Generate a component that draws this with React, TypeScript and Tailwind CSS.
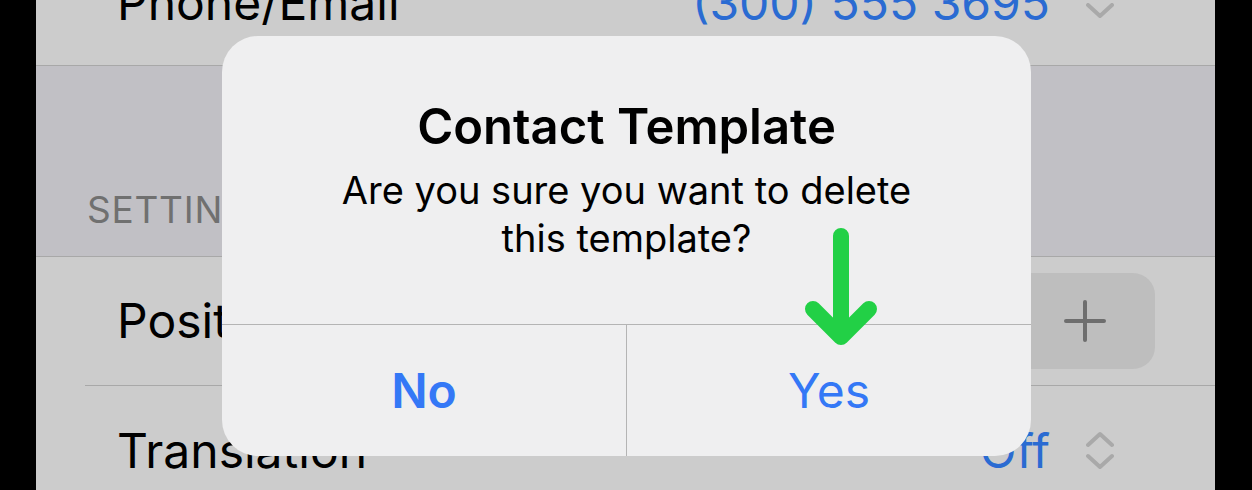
const font = { fontFamily: "Inter, 'Noto Sans', sans-serif" };

function ChevronDown() {
  return (
    <svg width="28" height="16" viewBox="0 0 28 16" fill="none">
      <path d="M2 2 L14 13 L26 2" stroke="#a9a9a9" strokeWidth="4" strokeLinecap="round" strokeLinejoin="round" />
    </svg>
  );
}

function ChevronUpDown() {
  return (
    <svg width="28" height="40" viewBox="0 0 28 40" fill="none">
      <path d="M2 14 L14 3 L26 14" stroke="#a9a9a9" strokeWidth="4" strokeLinecap="round" strokeLinejoin="round" />
      <path d="M2 25 L14 36 L26 25" stroke="#a9a9a9" strokeWidth="4" strokeLinecap="round" strokeLinejoin="round" />
    </svg>
  );
}

function Stepper() {
  return (
    <div className="flex h-[96px] w-[282px] items-center rounded-[22px] bg-[#bebebe]">
      <div className="flex flex-1 items-center justify-center">
        <div className="h-[4px] w-[40px] rounded-full bg-[#6e6e6e]" />
      </div>
      <div className="h-[48px] w-[2px] bg-[#aaaaaa]" />
      <div className="flex flex-1 items-center justify-center">
        <svg width="42" height="42" viewBox="0 0 42 42">
          <path d="M21 2 V40 M2 21 H40" stroke="#6e6e6e" strokeWidth="4" strokeLinecap="round" />
        </svg>
      </div>
    </div>
  );
}

function Arrow() {
  return (
    <svg className="absolute left-[800px] top-[220px]" width="90" height="130" viewBox="0 0 90 130" fill="none">
      <path d="M41 16 V116 M13 89 L41 117 L69 89" stroke="#22d046" strokeWidth="16" strokeLinecap="round" strokeLinejoin="round" />
    </svg>
  );
}

export default function App() {
  return (
    <div className="relative flex h-[490px] w-[1252px] overflow-hidden bg-black" style={font}>
      <div className="w-[36px] shrink-0 bg-black" />
      <div className="flex w-[1179px] shrink-0 flex-col">
        {/* Phone/Email row, cut at top */}
        <div className="flex h-[66px] shrink-0 items-end border-b border-[#a8a8a8] bg-[#cccccc] pb-[38px] pl-[81px] pr-[101px]">
          <span className="text-[48px] leading-[48px] text-black">Phone/Email</span>
          <span className="ml-auto text-[48px] leading-[48px] text-[#2a6bd2]">(300) 555 3695</span>
          <span className="mb-[8px] ml-[36px]">
            <ChevronDown />
          </span>
        </div>

        {/* section header */}
        <div className="flex h-[191px] shrink-0 items-end border-b border-[#a8a8a8] bg-[#c1c0c5] pb-[22px] pl-[51px]">
          <span className="text-[37px] uppercase leading-[48px] tracking-[0.02em] text-[#707070]">Settings</span>
        </div>

        {/* Position row */}
        <div className="flex h-[129px] shrink-0 bg-[#cccccc] pl-[49px]">
          <div className="flex flex-1 items-center border-b border-[#a8a8a8] pl-[32px] pr-[60px]">
            <span className="text-[48px] leading-[48px] text-black">Position</span>
            <span className="ml-auto">
              <Stepper />
            </span>
          </div>
        </div>

        {/* Translation row */}
        <div className="flex h-[129px] shrink-0 items-center bg-[#cccccc] pl-[81px] pr-[101px]">
          <span className="text-[48px] leading-[48px] text-black">Translation</span>
          <span className="ml-auto text-[48px] leading-[48px] text-[#2a6bd2]">Off</span>
          <span className="ml-[36px]">
            <ChevronUpDown />
          </span>
        </div>
      </div>
      <div className="flex-1 bg-black" />

      {/* alert */}
      <div className="absolute left-[222px] top-[36px] flex h-[420px] w-[809px] flex-col overflow-hidden rounded-[36px] bg-[#efeff0]">
        <div className="flex flex-1 flex-col items-center pt-[63px] text-center">
          <div className="text-[49px] font-semibold leading-[56px] text-black">Contact Template</div>
          <div className="mt-[11px] text-[38px] leading-[48px] text-black">
            Are you sure you want to delete
            <br />
            this template?
          </div>
        </div>
        <div className="flex h-[132px] shrink-0 border-t border-[#b4b4b4]">
          <div className="flex flex-1 items-center justify-center border-r border-[#b4b4b4] text-[48px] font-semibold text-[#3478f6]">
            No
          </div>
          <div className="flex flex-1 items-center justify-center text-[48px] text-[#3478f6]">Yes</div>
        </div>
      </div>
      <Arrow />
    </div>
  );
}
